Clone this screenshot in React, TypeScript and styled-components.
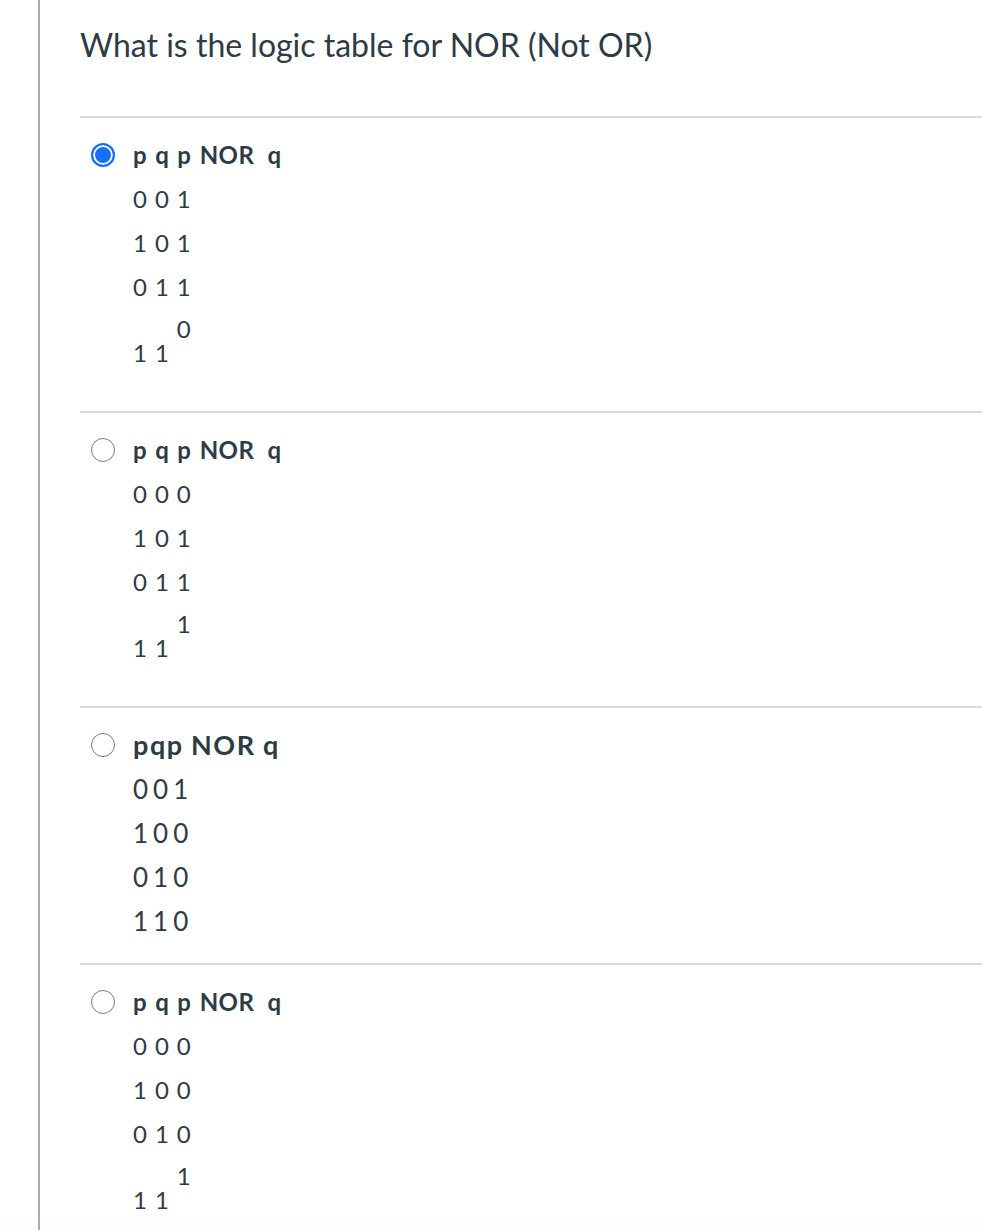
import React from 'react'
import styled, { createGlobalStyle, css } from 'styled-components'

const GlobalStyle = createGlobalStyle`
    body {
        margin: 0;
        background: #ffffff;
        font-family: Lato, "Noto Sans", sans-serif;
        color: #2d3b45;
    }
`

const Page = styled.div`
    display: flex;
    min-height: 1230px;
    background: linear-gradient(180deg, #ffffff calc(100% - 40px), #f5f5f5 100%);
`

const Main = styled.main`
    flex: 1;
    margin-left: 38px;
    border-left: 2px solid #ababab;
    padding-left: 40px;
`

const Question = styled.h1`
    margin: 0 0 54px;
    padding-top: 27px;
    font-size: 32px;
    font-weight: 400;
    line-height: 35px;
    color: #2d3b45;
`

const Option = styled.section`
    display: grid;
    grid-template-columns: 53px 1fr;
    border-top: 2px solid #dadcde;
    padding: 15px 0 20px;
`

const RadioCell = styled.div`
    display: flex;
    align-items: flex-start;
    padding: 10px 0 0 11px;
`

const Radio = styled.span<{ $checked?: boolean }>`
    display: block;
    width: 24px;
    height: 24px;
    box-sizing: border-box;
    border-radius: 50%;
    ${p => p.$checked
        ? css`
            border: 2px solid #1471f5;
            background: #1471f5;
            box-shadow: inset 0 0 0 2px #ffffff;
        `
        : css`
            border: 1.5px solid #6f7b84;
            background: #ffffff;
        `}
`

const Body = styled.div`
    display: flex;
    flex-direction: column;
`

// option 3 was pasted in a plain, slightly larger style; the others keep spaced columns
const Head = styled.div<{ $plain?: boolean }>`
    font-weight: 700;
    line-height: 44px;
    ${p => p.$plain
        ? css`
            font-size: 27px;
            letter-spacing: 1.6px;
            word-spacing: -1px;
        `
        : css`
            font-size: 24px;
            letter-spacing: 0.4px;
            word-spacing: 7px;
        `}
`

const Vars = styled.span<{ $plain?: boolean }>`
    ${p => !p.$plain && css`
        letter-spacing: 8.5px;
        word-spacing: -14px;
    `}
`

const Row = styled.div<{ $plain?: boolean }>`
    line-height: 44px;
    font-size: ${p => (p.$plain ? '26px' : '24px')};
    letter-spacing: ${p => (p.$plain ? '5px' : '8px')};
`

const SplitRow = styled(Row)`
    margin-top: -2px;
    margin-bottom: 16px;
`

const Low = styled.span`
    vertical-align: -24px;
`

type Choice = {
    checked?: boolean
    plain?: boolean
    rows: string[]
    last?: [string, string]
}

const choices: Choice[] = [
    { checked: true, rows: ['001', '101', '011'], last: ['11', '0'] },
    { rows: ['000', '101', '011'], last: ['11', '1'] },
    { plain: true, rows: ['001', '100', '010', '110'] },
    { rows: ['000', '100', '010'], last: ['11', '1'] },
]

export default function App() {
    return (
        <Page>
            <GlobalStyle />
            <Main>
                <Question>What is the logic table for NOR (Not OR)</Question>
                {choices.map((c, i) => (
                    <Option key={i}>
                        <RadioCell>
                            <Radio $checked={c.checked} />
                        </RadioCell>
                        <Body>
                            <Head $plain={c.plain}>
                                <Vars $plain={c.plain}>{'pqp '}</Vars>NOR q
                            </Head>
                            {c.rows.map((r, j) => (
                                <Row key={j} $plain={c.plain}>{r}</Row>
                            ))}
                            {c.last && (
                                <SplitRow $plain={c.plain}>
                                    <Low>{c.last[0]}</Low>
                                    <span>{c.last[1]}</span>
                                </SplitRow>
                            )}
                        </Body>
                    </Option>
                ))}
            </Main>
        </Page>
    )
}
